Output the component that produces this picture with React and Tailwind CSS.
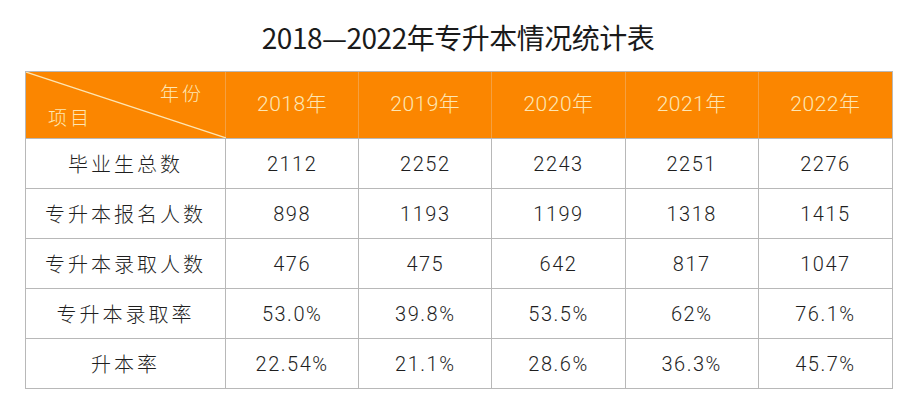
import React from "react";

const years = ["2018年", "2019年", "2020年", "2021年", "2022年"];
const rows = [
  ["毕业生总数", "2112", "2252", "2243", "2251", "2276"],
  ["专升本报名人数", "898", "1193", "1199", "1318", "1415"],
  ["专升本录取人数", "476", "475", "642", "817", "1047"],
  ["专升本录取率", "53.0%", "39.8%", "53.5%", "62%", "76.1%"],
  ["升本率", "22.54%", "21.1%", "28.6%", "36.3%", "45.7%"],
];

const NUM = '"Roboto", "Noto Sans CJK SC", sans-serif';
const CJK = '"Noto Sans CJK SC", sans-serif';

export default function App() {
  return (
    <div className="w-[916px] h-[412px] bg-white overflow-hidden" style={{ fontFamily: NUM }}>
      <div className="h-[71px] flex items-center justify-center pt-[2px]">
        <h1 className="text-[28px] leading-none text-[#1a1a1a] font-normal tracking-[-0.5px]" style={{ fontFamily: CJK }}>
          2018—2022年专升本情况统计表
        </h1>
      </div>
      <div className="ml-[25px] w-[868px] grid grid-cols-[200px_repeat(5,1fr)] border border-[#b8b8b8]">
        <div className="relative h-[66px] bg-[#fb8600] border-r border-[#f5a040] text-[#fde6b4] text-[19px] font-light">
          <svg className="absolute inset-0" width="200" height="66" viewBox="0 0 200 66">
            <line x1="0" y1="0" x2="200" y2="66" stroke="#fde6b4" strokeWidth="1.2" />
          </svg>
          <span className="absolute left-[134px] top-[7px] tracking-[3px]" style={{ fontFamily: CJK }}>年份</span>
          <span className="absolute left-[22px] top-[31px] tracking-[3px]" style={{ fontFamily: CJK }}>项目</span>
        </div>
        {years.map((y, i) => (
          <div
            key={y}
            className={`h-[66px] bg-[#fb8600] flex items-center justify-center text-[#fde6b4] text-[21px] font-light tracking-[0.5px] ${i < 4 ? "border-r border-[#f5a040]" : ""}`}
          >
            {y}
          </div>
        ))}
        {rows.map((r, ri) =>
          r.map((c, ci) => (
            <div
              key={ri + "-" + ci}
              className={`h-[50px] flex items-center justify-center text-[#1e1e1e] text-[20px] font-light border-t border-[#b8b8b8] ${ci < 5 ? "border-r" : ""} ${ci === 0 ? "tracking-[3px]" : "tracking-[1.5px]"}`}
              style={ci === 0 ? { fontFamily: CJK } : undefined}
            >
              {c}
            </div>
          ))
        )}
      </div>
    </div>
  );
}
